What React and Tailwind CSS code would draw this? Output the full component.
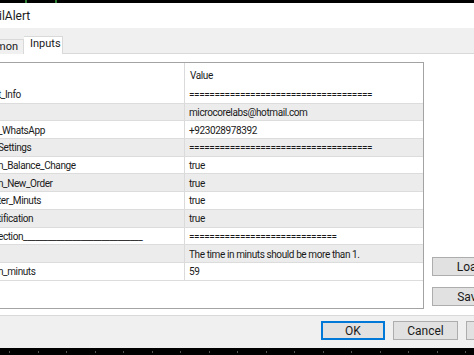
export default function App() {
  const eqA = "====================================";
  const eqB = "=============================";
  const rows = [
    ["t_Info", eqA],
    ["", "microcorelabs@hotmail.com"],
    ["_WhatsApp", "+923028978392"],
    ["Settings", eqA],
    ["n_Balance_Change", "true"],
    ["n_New_Order", "true"],
    ["ter_Minuts", "true"],
    ["tification", "true"],
    ["ection_____________________________", eqB],
    ["", "The time in minuts should be more than 1."],
    ["n_minuts", "59"],
  ];
  const dots = Array.from({ length: 17 });
  return (
    <div
      className="w-[474px] h-[355px] overflow-hidden flex flex-col bg-[#f0f0f0] text-[#1a1a1a]"
      style={{ fontFamily: 'Roboto, "Liberation Sans", Arial, sans-serif' }}
    >
      <div className="h-[3px] shrink-0 bg-black flex">
        <div className="ml-[25px] w-[2px] bg-[#2e7d32]" />
        <div className="ml-[28px] w-[2px] bg-[#2e7d32]" />
      </div>
      <div className="h-[25px] shrink-0 bg-white flex items-center text-[12px] -ml-[1px]">ilAlert</div>
      <div className="h-[26px] shrink-0 flex items-end border-b border-[#d9d9d9]">
        <div className="h-[15px] w-[24px] flex items-center justify-end pr-[5px] border-t border-r border-[#d9d9d9] text-[11px] -mb-px bg-[#f0f0f0]">
          mon
        </div>
        <div className="h-[18px] w-[39px] flex items-center pl-[6px] pb-[2px] bg-white border-t border-r border-[#d9d9d9] text-[11px] -mb-px relative">
          Inputs
        </div>
      </div>
      <div className="h-[262px] shrink-0 bg-white border-b border-[#d9d9d9] pt-[8px] flex">
        <div className="w-[424px] h-[247px] shrink-0 border-t border-r border-b border-[#a3a3a3] flex flex-col text-[10px] tracking-[-0.4px]">
          <div className="h-[23px] shrink-0 flex">
            <div className="w-[185px] border-r border-[#dadada]" />
            <div className="flex-1 flex items-center pl-[5px] pt-[1px]">Value</div>
          </div>
          {rows.map(([k, v], i) => (
            <div
              key={i}
              className={
                "h-[17.7px] shrink-0 flex border-b border-[#dcdcdc] " +
                (i % 2 === 1 ? "bg-[#ececec]" : "bg-white")
              }
            >
              <div className="w-[187px] shrink-0 border-r border-[#dadada] flex items-center pt-px -ml-[2px] overflow-hidden whitespace-nowrap">
                {k}
              </div>
              <div className="flex-1 flex items-center pt-px pl-[4px] whitespace-nowrap">{v}</div>
            </div>
          ))}
          <div className="flex-1" />
        </div>
        <div className="ml-[8px] h-[247px] flex flex-col justify-end pb-[3px] gap-[11px]">
          <div className="w-[76px] h-[19px] bg-[#e1e1e1] border border-[#adadad] flex items-center justify-center text-[12px]">
            Load
          </div>
          <div className="w-[76px] h-[19px] bg-[#e1e1e1] border border-[#adadad] flex items-center justify-center text-[12px]">
            Save
          </div>
        </div>
      </div>
      <div className="flex-1 flex pt-[5px] pl-[321px] gap-[8px] text-[12px]">
        <div className="w-[64px] h-[19px] shrink-0 bg-[#e1e1e1] border-2 border-[#0078d7] flex items-center justify-center">
          OK
        </div>
        <div className="w-[65px] h-[19px] shrink-0 bg-[#e1e1e1] border border-[#adadad] flex items-center justify-center">
          Cancel
        </div>
        <div className="w-[65px] h-[19px] shrink-0 bg-[#e1e1e1] border border-[#adadad] flex items-center justify-center">
          Help
        </div>
      </div>
      <div className="h-[7px] shrink-0 bg-black flex items-center pl-[9px] gap-[27.5px]">
        {dots.map((_, i) => (
          <div key={i} className="w-px h-[2px] bg-[#555]" />
        ))}
      </div>
    </div>
  );
}
